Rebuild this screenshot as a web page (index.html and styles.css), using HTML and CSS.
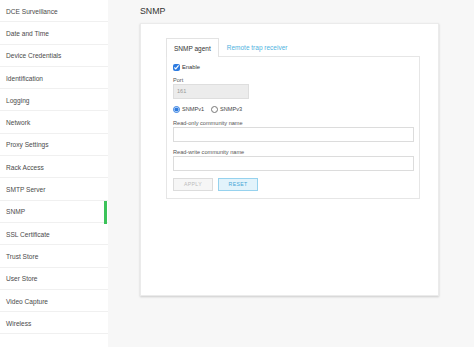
FILE: index.html
```html
<!DOCTYPE html>
<html>
<head>
    <title>SNMP</title>
    <link rel="stylesheet" href="styles.css">
</head>
<body>
    <div class="sidebar">
        <div class="nav-item">DCE Surveillance</div>
        <div class="nav-item">Date and Time</div>
        <div class="nav-item">Device Credentials</div>
        <div class="nav-item">Identification</div>
        <div class="nav-item">Logging</div>
        <div class="nav-item">Network</div>
        <div class="nav-item">Proxy Settings</div>
        <div class="nav-item">Rack Access</div>
        <div class="nav-item">SMTP Server</div>
        <div class="nav-item active">SNMP</div>
        <div class="nav-item">SSL Certificate</div>
        <div class="nav-item">Trust Store</div>
        <div class="nav-item">User Store</div>
        <div class="nav-item">Video Capture</div>
        <div class="nav-item">Wireless</div>
    </div>
    <div class="main">
        <h1 class="page-title">SNMP</h1>
        <div class="card">
            <div class="tabs">
                <div class="tab active">SNMP agent</div>
                <div class="tab">Remote trap receiver</div>
            </div>
            <div class="panel">
                <label class="check-row">
                    <input type="checkbox" checked> Enable
                </label>
                <div class="field-label">Port</div>
                <div class="port-input">161</div>
                <div class="radio-row">
                    <label class="radio"><input type="radio" name="ver" checked> SNMPv1</label>
                    <label class="radio"><input type="radio" name="ver"> SNMPv3</label>
                </div>
                <div class="field-label">Read-only community name</div>
                <div class="text-input"></div>
                <div class="field-label second">Read-write community name</div>
                <div class="text-input"></div>
                <div class="buttons">
                    <div class="btn btn-apply">APPLY</div>
                    <div class="btn btn-reset">RESET</div>
                </div>
            </div>
        </div>
    </div>
</body>
</html>
```
FILE: styles.css
```css
body {
    font-family: "Liberation Sans", Arial, sans-serif;
    background-color: #fff;
    margin: 0;
    padding: 0;
    display: flex;
    height: 100vh;
    color: #333;
    overflow: hidden;
}
.sidebar {
    width: 108px;
    flex-shrink: 0;
    background-color: #fff;
}
.nav-item {
    position: relative;
    box-sizing: border-box;
    height: 22.3px;
    padding-left: 6px;
    padding-top: 1px;
    display: flex;
    align-items: center;
    border-bottom: 1px solid #f0f0f0;
    font-size: 6.6px;
    color: #4a4a4a;
}
.nav-item.active::after {
    content: "";
    position: absolute;
    right: 1px;
    top: 0;
    bottom: -2px;
    width: 3px;
    background-color: #3cc35a;
}
.main {
    flex: 1;
    height: 347px;
    background-color: #f7f7f7;
    padding-left: 32px;
}
.page-title {
    margin: 0;
    padding-top: 6px;
    font-size: 8.8px;
    line-height: 10px;
    font-weight: normal;
    color: #333;
}
.card {
    box-sizing: border-box;
    margin-top: 7px;
    width: 299px;
    height: 273px;
    background-color: #fff;
    border: 1px solid #ebebeb;
    box-shadow: 0 1px 2px rgba(0, 0, 0, 0.18);
    padding: 14px 0 0 25px;
}
.tabs {
    display: flex;
    height: 19px;
    margin-bottom: -1px;
}
.tab {
    padding: 0 8px;
    line-height: 19px;
    font-size: 6.5px;
    color: #4fb3e0;
}
.tab.active {
    position: relative;
    padding: 0 7px;
    background-color: #fff;
    color: #333;
    border: 1px solid #e3e3e3;
    border-bottom: none;
    line-height: 19px;
}
.panel {
    box-sizing: border-box;
    width: 254px;
    border: 1px solid #e6e6e6;
    padding: 0 6px 7px 6px;
}
.check-row {
    display: flex;
    align-items: center;
    height: 10px;
    margin-top: 5px;
    font-size: 5.8px;
    color: #333;
}
.check-row input {
    width: 7px;
    height: 7px;
    margin: 0 2px 0 0;
    accent-color: #2d7be0;
}
.field-label {
    height: 8px;
    line-height: 8px;
    margin-top: 4px;
    font-size: 5.6px;
    color: #555;
}
.field-label.second {
    margin-top: 6px;
}
.port-input {
    box-sizing: border-box;
    width: 76px;
    height: 15px;
    background-color: #ececec;
    border: 1px solid #dedede;
    padding-left: 3px;
    line-height: 13px;
    font-size: 5.6px;
    color: #999;
}
.radio-row {
    display: flex;
    align-items: center;
    height: 10px;
    margin-top: 5px;
    margin-bottom: 5px;
}
.radio {
    display: flex;
    align-items: center;
    font-size: 5.6px;
    color: #444;
    margin-right: 7px;
}
.radio input {
    width: 7px;
    height: 7px;
    margin: 0 2px 0 0;
    accent-color: #2d7be0;
}
.text-input {
    box-sizing: border-box;
    width: 241px;
    height: 15px;
    background-color: #fff;
    border: 1px solid #dcdcdc;
}
.buttons {
    display: flex;
    gap: 5px;
    margin-top: 7px;
}
.btn {
    box-sizing: border-box;
    width: 40px;
    height: 13px;
    line-height: 11px;
    text-align: center;
    font-size: 5.2px;
    letter-spacing: 0.3px;
}
.btn-apply {
    background-color: #f6f6f6;
    border: 1px solid #dcdcdc;
    color: #bbb;
}
.btn-reset {
    background-color: #e2f3fb;
    border: 1px solid #96d2ee;
    color: #45a6d6;
}
```
